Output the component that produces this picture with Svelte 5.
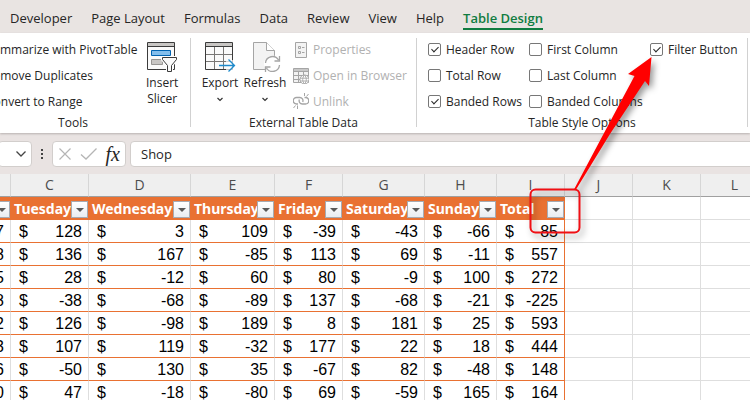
<script lang="ts">
  const tabs = ['Developer', 'Page Layout', 'Formulas', 'Data', 'Review', 'View', 'Help', 'Table Design'];
  let activeTab = $state('Table Design');

  const tools = ['Summarize with PivotTable', 'Remove Duplicates', 'Convert to Range'];

  let styleOptions = $state([
    { label: 'Header Row', checked: true },
    { label: 'Total Row', checked: false },
    { label: 'Banded Rows', checked: true },
    { label: 'First Column', checked: false },
    { label: 'Last Column', checked: false },
    { label: 'Banded Columns', checked: false },
    { label: 'Filter Button', checked: true },
  ]);

  let formula = $state('Shop');

  // The first column is scrolled mostly out of view
  const columns = [
    { letter: '', title: '', width: 11 },
    { letter: 'C', title: 'Tuesday', width: 78 },
    { letter: 'D', title: 'Wednesday', width: 102 },
    { letter: 'E', title: 'Thursday', width: 84 },
    { letter: 'F', title: 'Friday', width: 68 },
    { letter: 'G', title: 'Saturday', width: 82 },
    { letter: 'H', title: 'Sunday', width: 72 },
    { letter: 'I', title: 'Total', width: 68 },
  ];
  const emptyColumns = ['J', 'K', 'L'];

  const rows = [
    [7, 128, 3, 109, -39, -43, -66, 85],
    [8, 136, 167, -85, 113, 69, -11, 557],
    [5, 28, -12, 60, 80, -9, 100, 272],
    [8, -38, -68, -89, 137, -68, -21, -225],
    [2, 126, -98, 189, 8, 181, 25, 593],
    [3, 107, 119, -32, 177, 22, 18, 444],
    [6, -50, 130, 35, -67, 82, -48, 148],
    [0, 47, -18, -80, 69, -59, 165, 164],
  ];

  const tableWidth = columns.reduce((sum, c) => sum + c.width, 0) + emptyColumns.length * 68;
</script>

{#snippet chevron()}
  <svg class="chevron" width="8" height="5" viewBox="0 0 8 5" aria-hidden="true">
    <path d="M1.5 1 4 3.5 6.5 1" fill="none" stroke="#333" stroke-width="1.2" />
  </svg>
{/snippet}

<div class="app">
  <nav class="tabs">
    {#each tabs as tab}
      <button class="tab" class:active={tab === activeTab} onclick={() => (activeTab = tab)}>{tab}</button>
    {/each}
  </nav>

  <div class="ribbon">
    <section class="group group-tools">
      <div class="group-body">
        <div class="stack tool-list">
          {#each tools as tool}
            <button class="cmd">{tool}</button>
          {/each}
        </div>
        <button class="big-cmd slicer">
          <svg width="32" height="32" viewBox="0 0 32 32" aria-hidden="true">
            <path d="M1.5 2.5h27v27h-27z" fill="#fafafa" stroke="#3b3b3b" />
            <path d="M2 3h26v3H2z" fill="#c8c6c4" />
            <path d="M2 6.5h26" stroke="#3b3b3b" />
            <path d="M5.5 10.5h19v5h-19z" fill="#83beec" stroke="#0063b1" />
            <path d="M5.5 19.5h11v5h-11z" fill="#c8c6c4" stroke="#979593" />
            <path d="M16.5 17.5h14v2l-5 6v6h-4v-6l-5-6z" fill="#fff" stroke="#fff" stroke-width="3" />
            <path d="M16.5 17.5h14v2l-5 6v6h-4v-6l-5-6z" fill="#fafafa" stroke="#3b3b3b" />
          </svg>
          <span>Insert<br />Slicer</span>
        </button>
      </div>
      <div class="group-label tools-label">Tools</div>
    </section>

    <section class="group group-data">
      <div class="group-body">
        <button class="big-cmd export">
          <svg width="32" height="32" viewBox="0 0 32 32" aria-hidden="true">
            <path d="M1.5 2.5h27v27h-27z" fill="#fafafa" stroke="#3b3b3b" />
            <path d="M2 3h26v3H2z" fill="#c8c6c4" />
            <path d="M2 14.5h26M2 21.5h26M10.5 7v22M19.5 7v22" stroke="#797775" />
            <path d="M1.5 6.5h27" stroke="#3b3b3b" />
            <path d="M22 20h10v11H22z" fill="#fff" opacity=".7" />
            <path d="M15 25.5h15.5M24.5 19.5l6 6-6 6" fill="none" stroke="#1e8bcd" stroke-width="1.3" />
          </svg>
          <span>Export</span>
          {@render chevron()}
        </button>
        <button class="big-cmd refresh">
          <svg width="32" height="32" viewBox="0 0 32 32" aria-hidden="true">
            <path d="M4.5 2.5h13l8 8v19h-21z" fill="#f3f3f3" stroke="#a5a5a5" />
            <path d="M17.5 2.5v8h8" fill="#fff" stroke="#a5a5a5" />
            <circle cx="23.5" cy="24" r="8.5" fill="#fff" />
            <path d="M16.5 23a7 7 0 0 1 13-3M30.5 16v5h-5M30.5 25a7 7 0 0 1-13 3M16.5 32v-5h5" fill="none" stroke="#a5a5a5" stroke-width="1.3" />
          </svg>
          <span>Refresh</span>
          {@render chevron()}
        </button>
        <div class="stack data-list">
          <button class="cmd" disabled>
            <svg width="16" height="16" viewBox="0 0 16 16" aria-hidden="true">
              <path d="M2.5.5h11v15h-11z" fill="#f3f3f3" stroke="#a5a5a5" />
              <path d="M5.5 4.5h2v2h-2zM5.5 9.5h2v2h-2z" fill="none" stroke="#a5a5a5" />
              <path d="M9 5.5h2.5M9 10.5h2.5" stroke="#a5a5a5" />
            </svg>
            Properties
          </button>
          <button class="cmd" disabled>
            <svg width="16" height="16" viewBox="0 0 16 16" aria-hidden="true">
              <path d="M.5.5h15v14H.5z" fill="#f3f3f3" stroke="#a5a5a5" />
              <path d="M1 1h14v2H1z" fill="#c8c8c8" />
              <path d="M1 3.5h14M1 7.5h14M1 11.5h14M5.5 4v10M10.5 4v10" stroke="#a5a5a5" />
              <circle cx="11.5" cy="11.5" r="4.5" fill="#fff" stroke="#a5a5a5" />
              <path d="M7.5 10.2h8M7.5 13h8M11.5 7c-2.4 2.6-2.4 6.4 0 9M11.5 7c2.4 2.6 2.4 6.4 0 9" fill="none" stroke="#a5a5a5" stroke-width=".9" />
            </svg>
            Open in Browser
          </button>
          <button class="cmd" disabled>
            <svg width="16" height="16" viewBox="0 0 16 16" aria-hidden="true">
              <path d="M5 11H3.5a3.2 3.2 0 0 1 0-6.5h3.3a3.2 3.2 0 0 1 2.9 4.5M11.5 4.5h1a3.2 3.2 0 0 1 0 6.5H9.3a3.2 3.2 0 0 1-2.9-4.5" fill="none" stroke="#a5a5a5" stroke-width="1.3" />
              <path d="M11.5 3V0M13.5 3.5 15.5 1M4.5 12.5V16M2.5 12.5l-2 2.5" stroke="#a5a5a5" />
            </svg>
            Unlink
          </button>
        </div>
      </div>
      <div class="group-label">External Table Data</div>
    </section>

    <section class="group group-options">
      <div class="group-body option-grid">
        {#each styleOptions as option}
          <label class="option">
            <input type="checkbox" bind:checked={option.checked} />
            {option.label}
          </label>
        {/each}
      </div>
      <div class="group-label">Table Style Options</div>
    </section>
  </div>

  <div class="formula-row">
    <button class="name-box" aria-label="Name box">
      <svg width="12" height="8" viewBox="0 0 12 8" aria-hidden="true">
        <path d="M1.5 1.5 6 6l4.5-4.5" fill="none" stroke="#444" stroke-width="1.3" />
      </svg>
    </button>
    <svg class="dots" width="4" height="12" viewBox="0 0 4 12" aria-hidden="true">
      <path d="M1 1h2v2H1zM1 5h2v2H1zM1 9h2v2H1z" fill="#444" />
    </svg>
    <div class="fx-box">
      <button aria-label="Cancel">
        <svg width="14" height="14" viewBox="0 0 14 14" aria-hidden="true">
          <path d="m1.5 1.5 11 11M12.5 1.5l-11 11" stroke="#b5b5b5" stroke-width="1.2" />
        </svg>
      </button>
      <button aria-label="Enter">
        <svg width="18" height="14" viewBox="0 0 18 14" aria-hidden="true">
          <path d="m1 7.5 5 4.5L16.5 1.5" fill="none" stroke="#b5b5b5" stroke-width="1.3" />
        </svg>
      </button>
      <button class="fx" aria-label="Insert function">fx</button>
    </div>
    <input class="formula" type="text" aria-label="Formula bar" bind:value={formula} />
  </div>

  <div class="sheet">
    <table style="width: {tableWidth}px">
      <colgroup>
        {#each columns as column}
          <col style="width: {column.width}px" />
        {/each}
        {#each emptyColumns as _}
          <col class="empty-col" />
        {/each}
      </colgroup>
      <thead>
        <tr class="letters">
          {#each columns as column}
            <th scope="col">{column.letter}</th>
          {/each}
          {#each emptyColumns as letter}
            <th scope="col">{letter}</th>
          {/each}
        </tr>
      </thead>
      <tbody>
        <tr class="titles">
          {#each columns as column}
            <th scope="col">
              <div class="title">
                {#if column.title}<span>{column.title}</span>{/if}
                <button class="filter" aria-label="Filter {column.title}">
                  <svg width="8" height="4" viewBox="0 0 8 4" aria-hidden="true">
                    <path d="M0 0h8L4 4z" fill="#595959" />
                  </svg>
                </button>
              </div>
            </th>
          {/each}
          {#each emptyColumns as _}
            <td class="empty"></td>
          {/each}
        </tr>
        {#each rows as row}
          <tr>
            {#each row as value, i}
              <td class="money">
                <div class="amount">
                  {#if i > 0}<span>$</span>{/if}
                  <span class="value">{value}</span>
                </div>
              </td>
            {/each}
            {#each emptyColumns as _}
              <td class="empty"></td>
            {/each}
          </tr>
        {/each}
      </tbody>
    </table>
  </div>

  <!-- Callout: box on the Total filter, arrow up to the Filter Button option -->
  <svg class="callout" width="750" height="400" viewBox="0 0 750 400" aria-hidden="true">
    <rect x="530.5" y="189.5" width="49" height="43" rx="5" fill="none" stroke="#f00f14" stroke-width="2" />
    <path d="M651.5 57 628 74l6.5 2L603.5 134 574 189.5h2L610 134l35-53 4 5z" fill="#f00" />
  </svg>
</div>

<style>
  :global(body) {
    margin: 0;
    background: #fff;
  }

  .app {
    position: relative;
    display: flex;
    flex-direction: column;
    height: 100vh;
    overflow: hidden;
    font-family: 'Open Sans', 'Noto Sans', sans-serif;
    font-size: 12px;
    color: #262626;
    background: #e9e3e2;
  }

  button {
    padding: 0;
    border: none;
    background: none;
    font: inherit;
    color: inherit;
    cursor: pointer;
  }

  svg {
    flex-shrink: 0;
  }

  /* Tab strip */
  .tabs {
    display: flex;
    flex-shrink: 0;
    gap: 19px;
    height: 33px;
    padding-left: 10px;
    box-sizing: border-box;
    background: #e9e4e2;
  }

  .tab {
    height: 30px;
    padding-top: 8px;
    box-sizing: border-box;
    font-size: 13px;
    line-height: 20px;
    white-space: nowrap;
    border-bottom: 2px solid transparent;
  }

  .tab.active {
    color: #107c41;
    font-weight: 600;
    border-bottom-color: #107c41;
  }

  /* Ribbon */
  .ribbon {
    position: relative;
    display: flex;
    flex-shrink: 0;
    height: 100px;
    padding-top: 5px;
    box-sizing: border-box;
    background: #fff;
    box-shadow: 0 1px 2px #b8b2b0;
  }

  .group {
    display: flex;
    flex-direction: column;
    height: 89px;
    box-sizing: border-box;
    border-right: 1px solid #d1d1d1;
  }

  .group-tools {
    width: 191px;
  }

  .group-data {
    width: 226px;
  }

  .group-options {
    width: 331px;
  }

  .group-body {
    display: flex;
    height: 77px;
  }

  .group-label {
    line-height: 16px;
    text-align: center;
  }

  .tools-label {
    padding-right: 44px;
  }

  .stack {
    display: flex;
    flex-direction: column;
  }

  .cmd {
    display: flex;
    align-items: center;
    gap: 4px;
    height: 26px;
    padding-bottom: 2px;
    box-sizing: border-box;
    white-space: nowrap;
  }

  .cmd:disabled {
    color: #b1b1b1;
    cursor: default;
  }

  .tool-list {
    width: 143px;
    margin-left: -14px;
  }

  .data-list {
    margin-left: 6px;
  }

  .big-cmd {
    display: flex;
    flex-direction: column;
    align-items: center;
    padding-top: 2px;
    line-height: 16px;
  }

  .big-cmd svg + span {
    padding-top: 3px;
  }

  .slicer {
    margin-left: 17px;
  }

  .export {
    width: 44px;
    margin-left: 7px;
  }

  .refresh {
    width: 44px;
    margin-left: 1px;
  }

  .chevron {
    margin-top: 6px;
  }

  .option-grid {
    display: grid;
    grid-template-columns: 101px 121px auto;
    grid-template-rows: repeat(3, 26px);
    grid-auto-flow: column;
    justify-content: start;
    padding-left: 11px;
  }

  .option {
    display: flex;
    align-items: center;
    gap: 5px;
    padding-bottom: 4px;
    white-space: nowrap;
  }

  .option input {
    position: relative;
    appearance: none;
    width: 13px;
    height: 13px;
    margin: 0;
    border: 1px solid #777;
    border-radius: 2px;
    background: #fff;
  }

  .option input:checked::after {
    content: '';
    position: absolute;
    left: 4px;
    top: 1px;
    width: 3px;
    height: 6px;
    border: solid #262626;
    border-width: 0 1px 1px 0;
    transform: rotate(45deg);
  }

  /* Formula bar */
  .formula-row {
    display: flex;
    flex-shrink: 0;
    align-items: flex-start;
    height: 41px;
    padding-top: 8px;
    box-sizing: border-box;
  }

  .name-box,
  .fx-box,
  .formula {
    height: 26px;
    box-sizing: border-box;
    border: 1px solid #d2cecc;
    border-radius: 4px;
    background: #fff;
  }

  .name-box {
    display: flex;
    align-items: center;
    justify-content: flex-end;
    width: 34px;
    margin-left: -2px;
    padding-right: 4px;
  }

  .dots {
    margin: 7px 8px 0;
  }

  .fx-box {
    display: flex;
    align-items: center;
    justify-content: space-between;
    width: 74px;
    padding: 0 5px;
  }

  .fx-box button {
    display: flex;
  }

  .fx-box .fx {
    font-family: 'Liberation Serif', serif;
    font-size: 20px;
    font-style: italic;
    line-height: 20px;
  }

  .formula {
    flex: 1;
    min-width: 0;
    margin: 0 -4px 0 4px;
    padding: 0 10px;
    font-family: inherit;
    font-size: 13px;
    color: #262626;
    outline: none;
  }

  /* Sheet */
  .sheet {
    flex: 1;
    min-height: 0;
    overflow: hidden;
    background: #fff;
  }

  table {
    table-layout: fixed;
    border-collapse: separate;
    border-spacing: 0;
  }

  .empty-col {
    width: 68px;
  }

  th,
  td {
    height: 23px;
    padding: 0;
    box-sizing: border-box;
    border-right: 1px solid #dedede;
    border-bottom: 1px solid #e97132;
    overflow: hidden;
  }

  .letters th {
    border-right-color: #d6d6d6;
    border-bottom-color: #a0a0a0;
    background: #efefef;
    font-size: 14px;
    font-weight: 400;
    line-height: 20px;
    color: #4d4d4d;
  }

  .titles th {
    border-color: #e97132;
    background: #e97132;
    color: #fff;
  }

  .title {
    display: flex;
    align-items: flex-end;
    justify-content: flex-end;
    height: 22px;
    padding-left: 3px;
    font-family: 'Noto Sans', 'Open Sans', sans-serif;
    font-size: 14px;
    font-weight: 700;
    line-height: 20px;
  }

  .titles th:first-child .title {
    padding-left: 0;
  }

  .title span {
    flex: 1;
    width: 0;
    text-align: left;
  }

  .filter {
    display: flex;
    flex-shrink: 0;
    align-items: center;
    justify-content: center;
    width: 17px;
    height: 17px;
    margin-bottom: 1px;
    border: 1px solid #a6abb3;
    box-sizing: border-box;
    background: linear-gradient(#fff, #e9edf2);
  }

  .amount {
    display: flex;
    justify-content: space-between;
    padding: 2px 6px 0 8px;
    font-family: 'Liberation Sans', Arial, sans-serif;
    font-size: 16px;
    line-height: 20px;
    color: #000;
  }

  .value {
    margin-left: auto;
  }

  .money:first-child .amount {
    padding-left: 0;
    justify-content: flex-end;
  }

  .money:nth-child(8) {
    border-right-color: #e97132;
  }

  td.empty {
    border-bottom-color: #dedede;
  }

  .callout {
    position: absolute;
    top: 0;
    left: 0;
    pointer-events: none;
    filter: drop-shadow(3px 4px 3px rgba(0, 0, 0, 0.4));
  }
</style>
